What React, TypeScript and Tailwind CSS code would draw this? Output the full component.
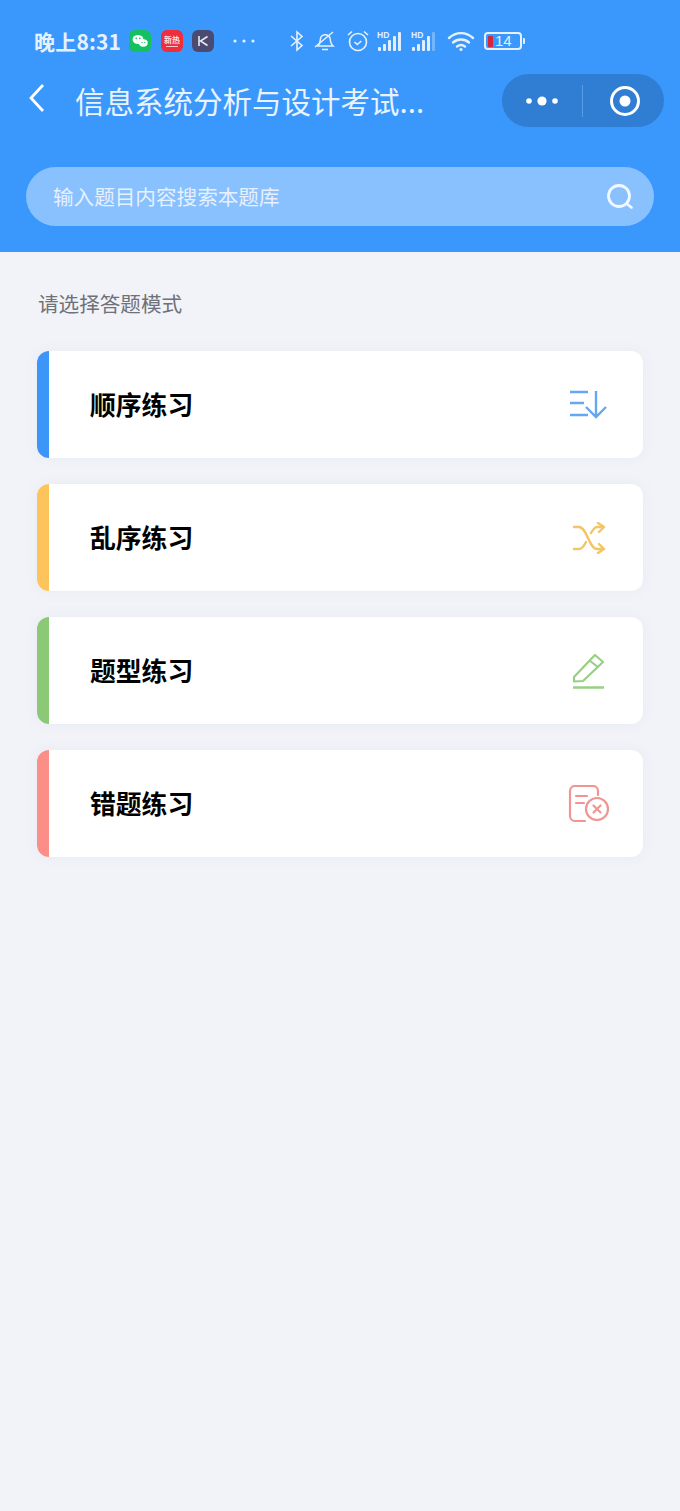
import React from "react";

const font = { };

function Wechat() {
  return (
    <svg width="22" height="22" viewBox="0 0 22 22" className="shrink-0">
      <rect width="22" height="22" rx="6" fill="#14c15f" />
      <ellipse cx="9" cy="9.5" rx="5.4" ry="4.5" fill="#fff" />
      <ellipse cx="14.3" cy="13" rx="4.4" ry="3.7" fill="#fff" />
      <circle cx="7.2" cy="8.4" r=".8" fill="#14c15f" />
      <circle cx="10.8" cy="8.4" r=".8" fill="#14c15f" />
      <circle cx="13" cy="12.4" r=".6" fill="#14c15f" />
      <circle cx="15.8" cy="12.4" r=".6" fill="#14c15f" />
    </svg>
  );
}

function Kuaibao() {
  return (
    <div className="w-[22px] h-[22px] rounded-[6px] bg-[#ee2d3d] flex flex-col items-center justify-center shrink-0">
      <span className="text-[8px] leading-[9px] font-bold text-[#ffe3e3] whitespace-nowrap">新热</span>
      <span className="w-[12px] h-[1px] mt-[2px] bg-[#ffc9c9]" />
    </div>
  );
}

function Keep() {
  return (
    <svg width="22" height="22" viewBox="0 0 22 22" className="shrink-0">
      <rect width="22" height="22" rx="6" fill="#4b4a70" />
      <path d="M7 6v10M15.5 6.5 8.5 11l7 4.5" fill="none" stroke="#e9e9ef" strokeWidth="1.6" />
    </svg>
  );
}

function Signal({ dim }: { dim?: boolean }) {
  return (
    <svg width="28" height="22" viewBox="0 0 28 22" className="shrink-0">
      <text x="0" y="8" fontSize="8.5" fontWeight="700" fill="#e2efff" fontFamily="Liberation Sans, sans-serif">HD</text>
      <rect x="1" y="17" width="3" height="4" rx="1" fill="#e2efff" />
      <rect x="6" y="14" width="3" height="7" rx="1" fill="#e2efff" />
      <rect x="11" y="10" width="3" height="11" rx="1" fill="#e2efff" />
      <rect x="16" y="6" width="3" height="15" rx="1" fill="#e2efff" />
      <rect x="21" y="2" width="3" height="19" rx="1" fill="#e2efff" opacity={dim ? 0.35 : 1} />
    </svg>
  );
}

function StatusBar() {
  return (
    <div className="h-[62px] pt-[28px] pl-[34px] flex items-start text-[#e6f1ff]">
      <div className="flex items-center h-[26px]">
        <span className="text-[21px] leading-[26px] font-semibold w-[86px] whitespace-nowrap tracking-[0.2px]">晚上8:31</span>
        <div className="ml-[9px]"><Wechat /></div>
        <div className="ml-[10px]"><Kuaibao /></div>
        <div className="ml-[9px]"><Keep /></div>
        <svg width="24" height="6" viewBox="0 0 24 6" className="ml-[18px]">
          <circle cx="3" cy="3" r="1.6" fill="#e6f1ff" />
          <circle cx="12" cy="3" r="1.6" fill="#e6f1ff" />
          <circle cx="21" cy="3" r="1.6" fill="#e6f1ff" />
        </svg>
        <svg width="14" height="22" viewBox="0 0 14 22" className="ml-[34px]" fill="none" stroke="#e6f1ff" strokeWidth="1.6">
          <path d="M1 6l11 9.5L7 20V2l5 4.5L1 16" />
        </svg>
        <svg width="24" height="24" viewBox="0 0 24 24" className="ml-[9px]" fill="none" stroke="#e6f1ff" strokeWidth="1.5">
          <path d="M5 17c2-2 2-4 2.4-7A5 5 0 0 1 17 9c.3 3 .8 6 3 8H5Z" />
          <path d="M9 20.5h6M2 18 20 3" />
        </svg>
        <svg width="24" height="24" viewBox="0 0 24 24" className="ml-[9px]" fill="none" stroke="#e6f1ff" strokeWidth="1.6">
          <circle cx="12" cy="13" r="8.5" />
          <path d="M8.5 13l2.8 2.5 4-3.5M2 6l4-3.5M22 6l-4-3.5" />
        </svg>
        <div className="ml-[7px]"><Signal /></div>
        <div className="ml-[6px]"><Signal dim /></div>
        <svg width="28" height="22" viewBox="0 0 28 22" className="ml-[8px]" fill="none" stroke="#e6f1ff" strokeWidth="2.4" strokeLinecap="round">
          <path d="M2 8c7-6.5 17-6.500 24 0M6 12.500c4.500-4 11.500-4 16 0M10 16.500c2.500-2 5.500-2 8 0" />
          <circle cx="14" cy="19.500" r="1" fill="#e6f1ff" strokeWidth="1.200" />
        </svg>
        <div className="ml-[9px] flex items-center">
          <div className="w-[38px] h-[18px] rounded-[4px] border-2 border-[#e6f1ff] flex items-center pl-[2px]">
            <span className="w-[5px] h-[11px] rounded-[1px] bg-[#d6263b]" />
            <span className="ml-[2px] text-[15px] leading-[14px] font-['Liberation_Sans',sans-serif] text-[#e6f1ff]">14</span>
          </div>
          <span className="ml-[1px] w-[2px] h-[6px] rounded-r-[1px] bg-[#e6f1ff]" />
        </div>
      </div>
    </div>
  );
}

function NavBar() {
  return (
    <div className="h-[76px] relative flex items-start pt-[12px]">
      <svg width="18" height="30" viewBox="0 0 18 30" className="ml-[28px] mt-[9px] shrink-0" fill="none" stroke="#fff" strokeWidth="2.8">
        <path d="M15 2 3 15l12 13" />
      </svg>
      <span className="ml-[29px] w-[360px] text-[29.5px] leading-[52px] text-[#e9f3ff] whitespace-nowrap">信息系统分析与设计考试...</span>
      <div className="absolute left-[502px] top-[12px] w-[162px] h-[53px] rounded-full bg-[#2f7ed4] flex items-center">
        <svg width="36" height="14" viewBox="0 0 36 14" className="ml-[22px]">
          <circle cx="5" cy="7" r="2.8" fill="#fff" />
          <circle cx="18" cy="7" r="4.6" fill="#fff" />
          <circle cx="31" cy="7" r="2.8" fill="#fff" />
        </svg>
        <span className="ml-[22px] w-[1px] h-[32px] bg-[#5b9ce4]" />
        <svg width="32" height="32" viewBox="0 0 32 32" className="ml-[26px]">
          <circle cx="16" cy="16" r="13.500" fill="none" stroke="#fff" strokeWidth="3" />
          <circle cx="16" cy="16" r="5.500" fill="#fff" />
        </svg>
      </div>
    </div>
  );
}

function SearchBar() {
  return (
    <div className="mx-[26px] mt-[29px] h-[59px] rounded-full bg-[#89c0fe] flex items-center justify-between pl-[27px] pr-[20px]">
      <span className="text-[20.6px] text-[#e6f1ff]">输入题目内容搜索本题库</span>
      <svg width="28" height="28" viewBox="0 0 28 28" fill="none" stroke="#f2f8ff" strokeWidth="2.8" strokeLinecap="round">
        <circle cx="13" cy="13" r="10.500" />
        <path d="M21 21l4.500 3.500" />
      </svg>
    </div>
  );
}

const IconSeq = (
  <svg width="40" height="30" viewBox="0 0 40 30" fill="none" stroke="#64a7f3" strokeWidth="2.4">
    <path d="M1 2h18M1 13h14M1 25h18M27 1v25M17 17l10 10 10-10" />
  </svg>
);
const IconShuffle = (
  <svg width="34" height="32" viewBox="0 0 34 32" fill="none" stroke="#f3c665" strokeWidth="2.4" strokeLinecap="round" strokeLinejoin="round">
    <path d="M2 5h5c8 0 10 22 18 22h6M2 27h5c3 0 5-3 7-7M19 11c2-3 3.500-6 6-6h6M26 1l6 4-5 5M27 22l5 5-6 4" />
  </svg>
);
const IconEdit = (
  <svg width="34" height="36" viewBox="0 0 34 36" fill="none" stroke="#97d083" strokeWidth="2.200" strokeLinejoin="round">
    <path d="M2 24 21 4l2-2 8 7-20 19-9 .5V24Z" />
    <path d="M17.500 7.500l9 7" />
    <path d="M1 34.500h31" strokeWidth="2.600" />
  </svg>
);
const IconWrong = (
  <svg width="42" height="38" viewBox="0 0 42 38" fill="none" stroke="#f0958f" strokeWidth="2.200" strokeLinecap="round">
    <path d="M17 36H7a5 5 0 0 1-5-5V6a5 5 0 0 1 5-5h18a5 5 0 0 1 5 5v4" />
    <path d="M8 11h11M8 18h8" />
    <circle cx="29" cy="24" r="11" />
    <path d="M25.500 20.500l7 7M32.500 20.500l-7 7" />
  </svg>
);

const items = [
  { title: "顺序练习", bar: "bg-[#3b96f8]", icon: IconSeq, mr: "mr-[34px]" },
  { title: "乱序练习", bar: "bg-[#fdc45c]", icon: IconShuffle, mr: "mr-[37px]" },
  { title: "题型练习", bar: "bg-[#8bc976]", icon: IconEdit, mr: "mr-[37px]" },
  { title: "错题练习", bar: "bg-[#fb8f87]", icon: IconWrong, mr: "mr-[33px]" },
];

export default function App() {
  return (
    <div className="w-[680px] h-[1511px] overflow-hidden bg-[#f1f3f9] font-['Noto_Sans_CJK_SC','Noto_Sans',sans-serif]">
      <div className="h-[252px] bg-[#3a98fd]">
        <StatusBar />
        <NavBar />
        <SearchBar />
      </div>
      <div className="px-[37px]">
        <p className="mt-[36px] ml-[1px] text-[20.6px] leading-[30px] text-[#6f7177]">请选择答题模式</p>
        <div className="mt-[33px] flex flex-col gap-[26px]">
          {items.map((it) => (
            <div key={it.title} className="w-[606px] h-[107px] flex rounded-[12px] bg-white overflow-hidden shadow-[0_0_10px_rgba(225,228,238,0.5)]">
              <div className={`w-[12px] shrink-0 ${it.bar}`} />
              <div className="flex-1 flex items-center justify-between">
                <span className="ml-[41px] text-[25.8px] font-bold text-black">{it.title}</span>
                <div className={it.mr}>{it.icon}</div>
              </div>
            </div>
          ))}
        </div>
      </div>
    </div>
  );
}
